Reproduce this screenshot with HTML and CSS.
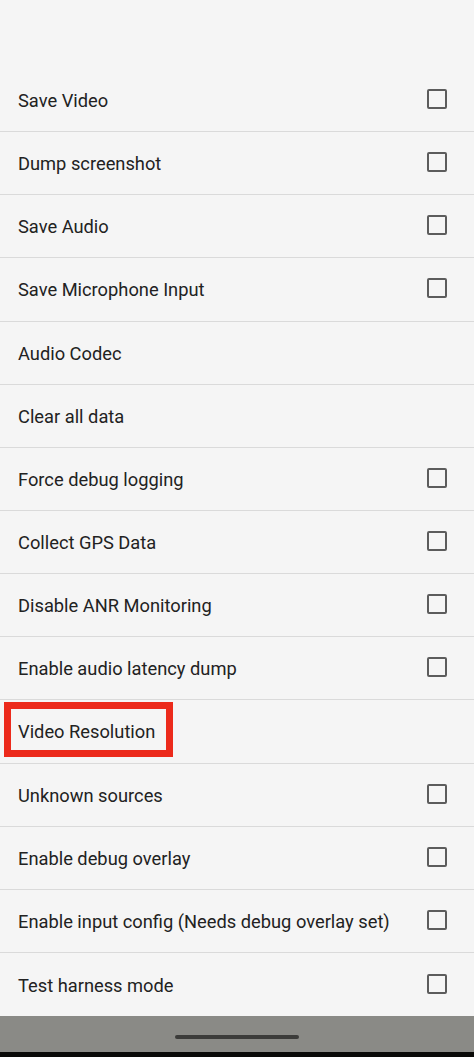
FILE: index.html
```html
<!DOCTYPE html>
<html>
<head>
<meta charset="utf-8">
<link rel="stylesheet" href="styles.css">
</head>
<body>
<div class="screen">
  <div class="top-space"></div>
  <ul class="list">
    <li class="row"><span class="label">Save Video</span><span class="check"></span></li>
    <li class="row"><span class="label">Dump screenshot</span><span class="check"></span></li>
    <li class="row"><span class="label">Save Audio</span><span class="check"></span></li>
    <li class="row"><span class="label">Save Microphone Input</span><span class="check"></span></li>
    <li class="row"><span class="label">Audio Codec</span></li>
    <li class="row"><span class="label">Clear all data</span></li>
    <li class="row"><span class="label">Force debug logging</span><span class="check"></span></li>
    <li class="row"><span class="label">Collect GPS Data</span><span class="check"></span></li>
    <li class="row"><span class="label">Disable ANR Monitoring</span><span class="check"></span></li>
    <li class="row"><span class="label">Enable audio latency dump</span><span class="check"></span></li>
    <li class="row"><span class="label">Video Resolution</span><span class="highlight"></span></li>
    <li class="row"><span class="label">Unknown sources</span><span class="check"></span></li>
    <li class="row"><span class="label">Enable debug overlay</span><span class="check"></span></li>
    <li class="row"><span class="label">Enable input config (Needs debug overlay set)</span><span class="check"></span></li>
    <li class="row last"><span class="label">Test harness mode</span><span class="check"></span></li>
  </ul>
  <div class="navbar"><span class="pill"></span></div>
  <div class="bottom-edge"></div>
</div>
</body>
</html>
```
FILE: styles.css
```css
html, body {
  margin: 0;
  padding: 0;
  background: #f5f5f5;
}
.screen {
  width: 474px;
  height: 1057px;
  display: flex;
  flex-direction: column;
  background: #f5f5f5;
  font-family: Roboto, "Noto Sans", sans-serif;
  overflow: hidden;
}
.top-space {
  height: 69px;
  flex: none;
}
.list {
  list-style: none;
  margin: 0;
  padding: 0;
}
.row {
  position: relative;
  height: 63.15px;
  box-sizing: border-box;
  border-bottom: 1.5px solid #dadada;
  display: flex;
  align-items: center;
  justify-content: space-between;
  padding: 1px 27px 0 18px;
}
.row.last {
  border-bottom: none;
}
.label {
  font-size: 18.3px;
  color: #222222;
}
.check {
  width: 20px;
  height: 20px;
  box-sizing: border-box;
  border: 2.5px solid #5c5c5c;
  border-radius: 2px;
  margin-top: -3px;
}
.highlight {
  position: absolute;
  left: 4px;
  top: 2px;
  width: 169px;
  height: 55px;
  box-sizing: border-box;
  border: 7.5px solid #ec2a1b;
}
.navbar {
  height: 36px;
  flex: none;
  background: #8a8a86;
  display: flex;
  align-items: center;
  justify-content: center;
}
.pill {
  width: 124px;
  height: 4px;
  border-radius: 2px;
  background: #3c3c3a;
  margin-top: 6px;
}
.bottom-edge {
  flex: 1;
  background: #0a0a08;
}
```
